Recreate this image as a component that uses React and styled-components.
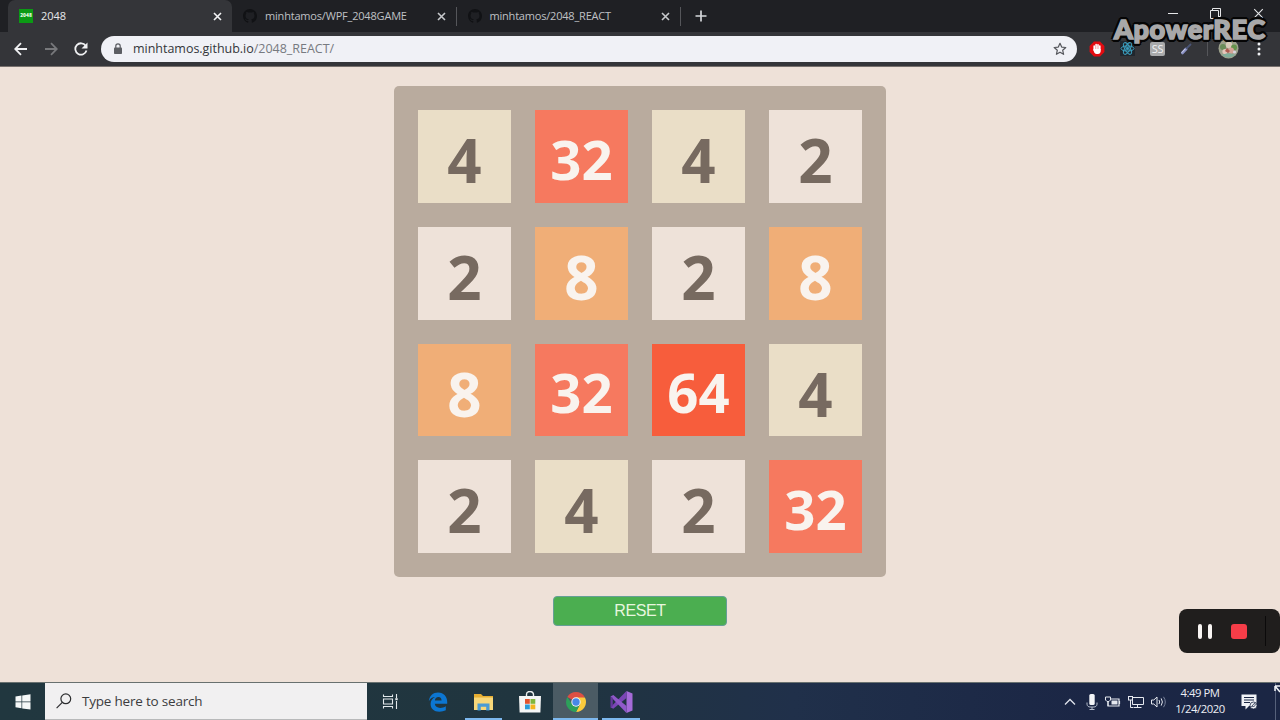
import styled, { createGlobalStyle, css } from 'styled-components';

const GlobalStyle = createGlobalStyle`
* {
  box-sizing: border-box;
}
body {
  margin: 0;
  overflow: hidden;
  font-family: "Open Sans", "Noto Sans", sans-serif;
}
svg {
  display: block;
  flex: none;
}
`;

const Screen = styled.div`
  position: relative;
  width: 1280px;
  height: 720px;
  display: flex;
  flex-direction: column;
  overflow: hidden;
  background: #eee1d8;
`;

/* browser */
const TabStrip = styled.div`
  height: 32px;
  display: flex;
  align-items: stretch;
  padding-left: 8px;
  background: #1f2024;
`;
const Tab = styled.div`
  width: ${(p) => p.$width || 224}px;
  display: flex;
  align-items: center;
  padding: 0 10px 0 11px;
  color: #bfc1c5;
  ${(p) => p.$active && css`
    background: #343539;
    border-radius: 7px 7px 0 0;
    color: #e8e9eb;
  `}
`;
const TabTitle = styled.span`
  flex: 1;
  margin-left: 8px;
  font-size: 11px;
  line-height: 16px;
  letter-spacing: ${(p) => p.$spacing || 0}px;
  white-space: nowrap;
`;
const Favicon = styled.div`
  width: 14px;
  height: 14px;
  background: #0b9a14;
  color: #d9f5d9;
  font-size: 5px;
  font-weight: 800;
  line-height: 13px;
  text-align: center;
`;
const Divider = styled.div`
  width: 1px;
  height: ${(p) => p.$height}px;
  align-self: center;
  background: #55565a;
`;
const NewTab = styled.div`
  display: flex;
  align-items: center;
  margin-left: 14px;
`;
const WindowButtons = styled.div`
  display: flex;
  align-items: center;
  gap: 32px;
  height: 26px;
  margin-left: auto;
  padding-right: 16px;
`;
const Toolbar = styled.div`
  height: 35px;
  display: flex;
  align-items: center;
  padding: 0 0 1px 14px;
  background: #343539;
  border-bottom: 1px solid #77706d;
`;
const NavButtons = styled.div`
  display: flex;
  gap: 16px;
  margin-right: 13px;
`;
const AddressBar = styled.div`
  width: 976px;
  height: 26px;
  display: flex;
  align-items: center;
  padding: 0 10px 0 12px;
  border-radius: 13px;
  background: #f0f1f6;
`;
const Url = styled.div`
  flex: 1;
  margin-left: 10px;
  font-size: 12.5px;
  line-height: 18px;
  letter-spacing: -0.02px;
  color: #34363a;
`;
const UrlPath = styled.span`
  color: #777a80;
`;
const Extensions = styled.div`
  display: flex;
  align-items: center;
  gap: 15px;
  margin-left: 12px;
`;
const Avatar = styled.div`
  margin: 0 3px 0 -5px;
`;
const Badge = styled.div`
  width: 15px;
  height: 14px;
  border-radius: 2px;
  background: #a9aaab;
  color: #f2f2f2;
  font-size: 11px;
  line-height: 14px;
  text-align: center;
  letter-spacing: -0.4px;
`;

/* game */
const Page = styled.main`
  flex: 1;
  display: flex;
  flex-direction: column;
  align-items: center;
  padding-top: 19px;
  background: #eee1d8;
`;
const Board = styled.div`
  display: grid;
  grid-template-columns: repeat(4, 93px);
  grid-template-rows: 93px 93px 92px 93px;
  gap: 24px;
  padding: 24px;
  border-radius: 5px;
  background: #b9ab9e;
`;
const tileColors = {
  2: '#eee2d9',
  4: '#eadec7',
  8: '#f0ae77',
  32: '#f6795f',
  64: '#f75d3c',
};
const Tile = styled.div`
  display: flex;
  align-items: center;
  justify-content: center;
  padding-top: ${(p) => (p.$value > 9 ? 5 : 7)}px;
  background: ${(p) => tileColors[p.$value]};
  color: ${(p) => (p.$value > 4 ? '#f9f3ee' : '#776a60')};
  font-size: ${(p) => (p.$value > 9 ? 54.5 : 60)}px;
  font-weight: 700;
  line-height: 1;
`;
const ResetButton = styled.button`
  width: 174px;
  height: 30px;
  margin-top: 19px;
  padding: 0;
  border: 1px solid #659f96;
  border-radius: 4px;
  background: #4bae50;
  color: #e8f6df;
  font-family: "Liberation Sans", Arial, sans-serif;
  font-size: 16px;
  letter-spacing: -0.4px;
`;

/* overlays */
const Watermark = styled.div`
  position: absolute;
  left: 1114px;
  top: 12px;
  color: #a8a8a9;
  font-family: Lato, sans-serif;
  font-size: 27px;
  font-weight: 900;
  line-height: 34px;
  letter-spacing: 0.6px;
  white-space: nowrap;
  -webkit-text-stroke: 1.6px #a8a8a9;
  text-shadow: 3px 0 #050505, -3px 0 #050505, 0 3px #050505, 0 -3px #050505,
    2.2px 2.2px #050505, -2.2px 2.2px #050505, 2.2px -2.2px #050505, -2.2px -2.2px #050505,
    1px 3px #050505, -1px 3px #050505, 1px -3px #050505, -1px -3px #050505;
`;
const Recorder = styled.div`
  position: absolute;
  right: 0;
  top: 609px;
  width: 101px;
  height: 44px;
  display: flex;
  align-items: center;
  padding-left: 19px;
  border-radius: 8px;
  background: #201e1d;
`;
const PauseBar = styled.div`
  width: 4px;
  height: 15px;
  margin-right: 6px;
  border-radius: 2px;
  background: #f8f5f3;
`;
const StopSquare = styled.div`
  width: 16px;
  height: 15px;
  margin-left: 13px;
  border-radius: 3px;
  background: #f53d48;
`;
const RecorderLine = styled.div`
  width: 1px;
  height: 30px;
  margin-left: 18px;
  background: #0b0a0a;
`;

/* taskbar */
const Taskbar = styled.footer`
  height: 38px;
  display: flex;
  align-items: stretch;
  border-top: 1px solid #68706f;
  background: linear-gradient(90deg, #21373f 0%, #20353f 42%, #20304a 62%, #1b2645 85%, #1b2644 100%);
`;
const TaskButton = styled.div`
  width: ${(p) => p.$width || 46}px;
  display: flex;
  align-items: center;
  justify-content: center;
  position: relative;
  background: ${(p) => (p.$active ? '#4b5b64' : 'transparent')};
  ${(p) => p.$open && css`
    &::after {
      content: '';
      position: absolute;
      left: ${p.$active ? 0 : 4}px;
      right: ${p.$active ? 0 : 4}px;
      bottom: 0;
      height: 2px;
      background: #7db8ee;
    }
  `}
`;
const SearchBox = styled.div`
  width: 322px;
  display: flex;
  align-items: center;
  padding-left: 11px;
  background: #f1f0f1;
  border-bottom: 1px solid #b8b9ba;
  color: #3c3c3e;
  font-size: 13.5px;
  letter-spacing: -0.2px;
`;
const SearchText = styled.span`
  margin-left: 10px;
`;
const Tray = styled.div`
  display: flex;
  align-items: center;
  margin-left: auto;
  gap: 7px;
`;
const TrayToggle = styled.div`
  margin-right: 3px;
`;
const Clock = styled.div`
  width: 56px;
  margin-left: -2px;
  color: #eceef4;
  font-size: 11.3px;
  line-height: 16.5px;
  padding-bottom: 1px;
  letter-spacing: -0.45px;
  text-align: center;
  white-space: nowrap;
`;
const Notification = styled.div`
  width: 42px;
  margin-left: 3px;
  padding-left: 3px;
`;
const DesktopEdge = styled.div`
  align-self: stretch;
  width: 5px;
  margin-left: -12px;
  border-left: 1px solid #56617a;
`;
const Cursor = styled.svg`
  position: absolute;
  left: 1274px;
  top: 685px;
`;

const CloseIcon = ({ color = '#c6c8cb', size = 9, weight = 1.6 }) => (
  <svg width={size} height={size} viewBox="0 0 9 9" stroke={color} strokeWidth={weight}>
    <path d="M1 1l7 7M8 1L1 8" />
  </svg>
);

const GithubIcon = () => (
  <svg width="14" height="14" viewBox="0 0 16 16" fill="#111215">
    <path d="M8 0C3.58 0 0 3.58 0 8c0 3.54 2.29 6.53 5.47 7.59.4.07.55-.17.55-.38 0-.19-.01-.82-.01-1.49-2.01.37-2.53-.49-2.69-.94-.09-.23-.48-.94-.82-1.13-.28-.15-.68-.52-.01-.53.63-.01 1.08.58 1.23.82.72 1.21 1.87.87 2.33.66.07-.52.28-.87.51-1.07-1.78-.2-3.64-.89-3.64-3.95 0-.87.31-1.59.82-2.15-.08-.2-.36-1.02.08-2.12 0 0 .67-.21 2.2.82a7.7 7.7 0 0 1 4 0c1.53-1.04 2.2-.82 2.2-.82.44 1.1.16 1.92.08 2.12.51.56.82 1.27.82 2.15 0 3.07-1.87 3.75-3.65 3.95.29.25.54.73.54 1.48 0 1.07-.01 1.93-.01 2.2 0 .21.15.46.55.38A8 8 0 0 0 16 8c0-4.42-3.58-8-8-8z" />
  </svg>
);

const BackIcon = ({ color, flip }) => (
  <svg width="14" height="14" viewBox="0 0 14 14" fill="none" stroke={color} strokeWidth="1.8">
    <path d={flip ? 'M1 7h11.5M7 1.2L12.8 7 7 12.8' : 'M13 7H1.5M7 1.2L1.2 7 7 12.8'} />
  </svg>
);

const ReloadIcon = () => (
  <svg width="14" height="14" viewBox="0 0 14 14">
    <path d="M11.7 3.7A5.7 5.7 0 1 0 12.5 8.6" fill="none" stroke="#f0f1f3" strokeWidth="1.8" />
    <path d="M13.5 .5v6H7.5z" fill="#f0f1f3" />
  </svg>
);

const LockIcon = () => (
  <svg width="10" height="12" viewBox="0 0 10 12">
    <rect x="1" y="4.5" width="8" height="6.5" rx=".8" fill="#5c5e63" />
    <path d="M2.8 5V3a2.2 2.2 0 0 1 4.4 0v2" fill="none" stroke="#5c5e63" strokeWidth="1.2" />
  </svg>
);

const StarIcon = () => (
  <svg width="14" height="14" viewBox="0 0 14 14" fill="none" stroke="#55575c" strokeWidth="1.2" strokeLinejoin="round">
    <path d="M7 1.3l1.7 3.8 4.1.4-3.1 2.8.9 4L7 10.2l-3.6 2.1.9-4L1.2 5.5l4.1-.4z" />
  </svg>
);

const AdblockIcon = () => (
  <svg width="16" height="16" viewBox="0 0 16 16">
    <path d="M5 .6h6L15.4 5v6L11 15.4H5L.6 11V5z" fill="#e30b10" />
    <path d="M5.2 9.2V5.1M7.1 8V3.6M9 8V3.8M10.8 9V5" stroke="#fff" strokeWidth="1.6" strokeLinecap="round" />
    <path d="M4.4 8h7.2v2.2c0 1.6-1 2.8-2.6 2.8H7.6C6 13 4.4 11 4.4 8z" fill="#fff" />
  </svg>
);

const ReactIcon = () => (
  <svg width="15" height="15" viewBox="0 0 15 15" fill="none" stroke="#3b9fbf" strokeWidth="1">
    <rect width="15" height="15" fill="#20262d" stroke="none" />
    <ellipse cx="7.5" cy="7.5" rx="6.5" ry="2.6" />
    <ellipse cx="7.5" cy="7.5" rx="6.5" ry="2.6" transform="rotate(60 7.5 7.5)" />
    <ellipse cx="7.5" cy="7.5" rx="6.5" ry="2.6" transform="rotate(120 7.5 7.5)" />
    <circle cx="7.5" cy="7.5" r="1.2" fill="#3b9fbf" />
  </svg>
);

const PenIcon = () => (
  <svg width="12" height="12" viewBox="0 0 12 12" strokeLinecap="round">
    <path d="M2.5 9.8L6 6" stroke="#8a91c4" strokeWidth="3" />
    <path d="M6.8 5.2L10.5 1.5" stroke="#4a5578" strokeWidth="1.8" />
    <path d="M2 9.4l3-3.2" stroke="#d6d9ee" strokeWidth="1" />
  </svg>
);

const AvatarIcon = () => (
  <svg width="21" height="21" viewBox="0 0 21 21">
    <circle cx="10.5" cy="10.5" r="10" fill="#9ea28c" />
    <circle cx="5" cy="9" r="3" fill="#6b8d59" />
    <circle cx="11" cy="7" r="3.2" fill="#d8cbb8" />
    <circle cx="16" cy="9.5" r="3" fill="#66934d" />
    <circle cx="7" cy="13.5" r="2.6" fill="#e5c7ba" />
    <circle cx="13" cy="12.5" r="3" fill="#d4a496" />
    <path d="M4 17c3-2 9-2 13 0a10 10 0 0 1-13 0z" fill="#7fae9a" />
    <path d="M9 10l3 3-2 2-3-2z" fill="#ae5b50" />
    <circle cx="16.5" cy="14" r="1.6" fill="#d8d3df" />
  </svg>
);

const MenuDots = () => (
  <svg width="4" height="14" viewBox="0 0 4 14" fill="#f0f1f3">
    <circle cx="2" cy="2" r="1.5" />
    <circle cx="2" cy="7" r="1.5" />
    <circle cx="2" cy="12" r="1.5" />
  </svg>
);

const WindowsIcon = () => (
  <svg width="16" height="16" viewBox="0 0 16 16" fill="#f5f8f8">
    <path d="M.5 2.4l6-.9v6h-6zM7.2 1.4L15.5.2v7.3H7.2zM.5 8.2h6v6l-6-.9zM7.2 8.2h8.3v7.4l-8.3-1.2z" />
  </svg>
);

const SearchIcon = () => (
  <svg width="16" height="16" viewBox="0 0 16 16" fill="none" stroke="#2c2d2f" strokeWidth="1.2">
    <circle cx="9.8" cy="5.8" r="4.9" />
    <path d="M6.3 9.3L.6 15.2" />
  </svg>
);

const TaskViewIcon = () => (
  <svg width="17" height="15" viewBox="0 0 17 15" fill="none" stroke="#e2e8eb" strokeWidth="1.1">
    <path d="M1.5.5v2h9v-2M1.5 5h9v5h-9zM1.5 14.5v-2h9v2M14.5 0v4M14.5 7v8" />
    <rect x="13.3" y="4.2" width="2.4" height="2" fill="#e2e8eb" stroke="none" />
  </svg>
);

const EdgeIcon = () => (
  <svg width="20" height="20" viewBox="0 0 20 20" fill="#0c76d2">
    <path d="M.8 9.2C1.6 3.8 5 .5 10.1.5c5.8 0 9.1 4.4 9.1 9.2v2.1H6.8c.2 2.8 2.4 4.1 5.3 4.1 2.2 0 4.1-.6 5.7-1.6v4c-1.9.9-4 1.4-6.5 1.4C6 19.7 2.6 16.7 2.6 12c0-3.3 1.9-5.7 4.6-6.9C4.5 5.2 2.3 6.5.8 9.2zM6.9 8.5h6.7c0-2.1-1-3.6-3.2-3.6-2 0-3.3 1.4-3.5 3.6z" />
  </svg>
);

const FolderIcon = () => (
  <svg width="21" height="18" viewBox="0 0 21 18">
    <path d="M1 1h7l2 2h10v14H1z" fill="#e6ae32" />
    <path d="M1 4.5h19V17H1z" fill="#f7d779" />
    <path d="M4.5 17.5v-7h12v7h-3.300v-3.700H7.800v3.700z" fill="#4a9bd4" />
  </svg>
);

const StoreIcon = () => (
  <svg width="22" height="22" viewBox="0 0 22 22">
    <path d="M7.5 7V3.5a3.5 3 0 0 1 7 0V7" fill="none" stroke="#edf0f0" strokeWidth="1.4" />
    <path d="M0 5h22l-.6 16.5H.6z" fill="#f4f5f5" />
    <rect x="6" y="8" width="4.8" height="4.8" fill="#e2532d" />
    <rect x="11.5" y="8" width="4.8" height="4.8" fill="#7fb63b" />
    <rect x="6" y="13.5" width="4.8" height="4.8" fill="#2a9cda" />
    <rect x="11.5" y="13.5" width="4.8" height="4.8" fill="#f3b51f" />
  </svg>
);

const ChromeIcon = () => (
  <svg width="20" height="20" viewBox="0 0 20 20">
    <path d="M10 10L1.34 5A10 10 0 0 1 18.66 5z" fill="#dd4f43" />
    <path d="M10 5.5h8.93A10 10 0 0 1 10 20l4-7.7z" fill="#fbcb3c" />
    <path d="M1.34 5L6.1 12.25 10 14.5l3.9-2.3L10 20A10 10 0 0 1 1.34 5z" fill="#2da05a" />
    <circle cx="10" cy="10" r="4.7" fill="#f4f4f4" />
    <circle cx="10" cy="10" r="3.7" fill="#4788e8" />
  </svg>
);

const VisualStudioIcon = () => (
  <svg width="23" height="22" viewBox="0 0 23 22">
    <path d="M16.5 0l6 2.5v17l-6 2.5z" fill="#a56bd8" />
    <path d="M16.5 0v7L3.3 17.7.5 16.3 16.5 0z" fill="#7a45b5" />
    <path d="M.5 5.5l2.8-1.4L16.5 15v7L.5 5.5z" fill="#9059c9" />
    <path d="M.5 5.5l2.3 1.3v8.4L.5 16.5z" fill="#65389b" />
  </svg>
);

const tabs = [
  { title: '2048', active: true },
  { title: 'minhtamos/WPF_2048GAME', spacing: -0.19, width: 223.5 },
  { title: 'minhtamos/2048_REACT', spacing: -0.2, width: 223 },
];

const board = [4, 32, 4, 2, 2, 8, 2, 8, 8, 32, 64, 4, 2, 4, 2, 32];

const BrowserTab = ({ title, active, spacing, width }) => (
  <Tab $active={active} $width={width}>
    {active ? <Favicon>2048</Favicon> : <GithubIcon />}
    <TabTitle $spacing={spacing}>{title}</TabTitle>
    <CloseIcon color={active ? '#f2f3f5' : undefined} />
  </Tab>
);

const Browser = () => (
  <>
    <TabStrip>
      <BrowserTab {...tabs[0]} />
      <BrowserTab {...tabs[1]} />
      <Divider $height={19} />
      <BrowserTab {...tabs[2]} />
      <Divider $height={19} />
      <NewTab>
        <svg width="12" height="12" viewBox="0 0 12 12" stroke="#d5d7da" strokeWidth="1.7">
          <path d="M6 .5v11M.5 6h11" />
        </svg>
      </NewTab>
      <WindowButtons>
        <svg width="10" height="10" viewBox="0 0 10 10" stroke="#e5e6e8"><path d="M0 5.5h10" /></svg>
        <svg width="11" height="11" viewBox="0 0 11 11" fill="none" stroke="#e5e6e8">
          <path d="M.5 2.5h8v8h-8zM2.5 2.5v-2h8v8h-2" />
        </svg>
        <CloseIcon color="#e5e6e8" size={11} weight={0.9} />
      </WindowButtons>
    </TabStrip>
    <Toolbar>
      <NavButtons>
        <BackIcon color="#f0f1f3" />
        <BackIcon color="#77787b" flip />
        <ReloadIcon />
      </NavButtons>
      <AddressBar>
        <LockIcon />
        <Url>minhtamos.github.io<UrlPath>/2048_REACT/</UrlPath></Url>
        <StarIcon />
      </AddressBar>
      <Extensions>
        <AdblockIcon />
        <ReactIcon />
        <Badge>SS</Badge>
        <PenIcon />
        <Divider $height={15} />
        <Avatar><AvatarIcon /></Avatar>
        <MenuDots />
      </Extensions>
    </Toolbar>
  </>
);

const SystemTray = () => (
  <Tray>
    <TrayToggle>
      <svg width="12" height="8" viewBox="0 0 12 8" fill="none" stroke="#dfe3ec" strokeWidth="1.3">
        <path d="M1 6.5l5-5 5 5" />
      </svg>
    </TrayToggle>
    <svg width="12" height="16" viewBox="0 0 12 16">
      <rect x="3.3" y="0" width="5.4" height="11" rx="1.5" fill="#f3f5f8" />
      <path d="M1 8.5v1.7c0 1.7 1.5 2.8 3 2.8h4c1.5 0 3-1.1 3-2.8V8.5M6 13v2.5M3.5 15.5h5" fill="none" stroke="#b5bccc" />
    </svg>
    <svg width="16" height="12" viewBox="0 0 16 12">
      <path d="M3 3h11v7H3zM14.5 5v3" fill="none" stroke="#e5e8ef" strokeWidth="1.2" />
      <rect x="6.5" y="4.5" width="6" height="4" fill="#e5e8ef" />
      <path d="M.5 1h5v3L4 5.500H2L.5 4zM3 5v5" fill="#1c2747" stroke="#e5e8ef" />
    </svg>
    <svg width="16" height="14" viewBox="0 0 16 14" fill="none" stroke="#e5e8ef">
      <path d="M4.5 2.5h11v7h-11zM9.5 9.5v3M5.5 12.5h8M2.5 5v7.5H5" />
      <rect x=".5" y="1.5" width="4" height="3.5" fill="#1c2747" />
    </svg>
    <svg width="16" height="14" viewBox="0 0 16 14" fill="none" stroke="#e5e8ef">
      <path d="M.5 5h2.3L6 2v10L2.8 9H.5zM8 5q1.4 2 0 4M10.2 3.4q2.4 3.6 0 7.2" />
      <path d="M12.5 1.8q3.6 5.2 0 10.4" stroke="#79829a" />
    </svg>
    <Clock>
      4:49 PM
      <br />
      1/24/2020
    </Clock>
    <Notification>
      <svg width="17" height="16" viewBox="0 0 17 16">
        <path d="M.5.5h15V12H8l-3.5 3.5V12h-4z" fill="#f1f3f7" />
        <path d="M3 3.5h10M3 6h10M3 8.5h6" stroke="#1b2644" />
        <circle cx="12.5" cy="11.5" r="3.5" fill="#f1f3f7" stroke="#1b2644" strokeWidth=".8" />
        <path d="M10.5 12.5l3-3.3c1.5 1.5.8 3.8-3 3.3z" fill="none" stroke="#1b2644" strokeWidth=".8" />
      </svg>
    </Notification>
    <DesktopEdge />
  </Tray>
);

const App = () => {
  return (
    <Screen>
      <GlobalStyle />
      <Browser />
      <Page>
        <Board>
          {board.map((value, i) => (
            <Tile key={i} $value={value}>{value}</Tile>
          ))}
        </Board>
        <ResetButton>RESET</ResetButton>
      </Page>
      <Taskbar>
        <TaskButton $width={45}><WindowsIcon /></TaskButton>
        <SearchBox>
          <SearchIcon />
          <SearchText>Type here to search</SearchText>
        </SearchBox>
        <TaskButton $width={47}><TaskViewIcon /></TaskButton>
        <TaskButton $width={47}><EdgeIcon /></TaskButton>
        <TaskButton $width={45} $open><FolderIcon /></TaskButton>
        <TaskButton $width={47}><StoreIcon /></TaskButton>
        <TaskButton $width={45} $open $active><ChromeIcon /></TaskButton>
        <TaskButton $open><VisualStudioIcon /></TaskButton>
        <SystemTray />
      </Taskbar>
      <Watermark>ApowerREC</Watermark>
      <Recorder>
        <PauseBar />
        <PauseBar />
        <StopSquare />
        <RecorderLine />
      </Recorder>
      <Cursor width="6" height="8" viewBox="0 0 6 8">
        <path d="M1 1h5M1 1v5M1 1l5 6" stroke="#f2f4f8" strokeWidth="1.5" fill="none" />
      </Cursor>
    </Screen>
  );
};

export default App;
